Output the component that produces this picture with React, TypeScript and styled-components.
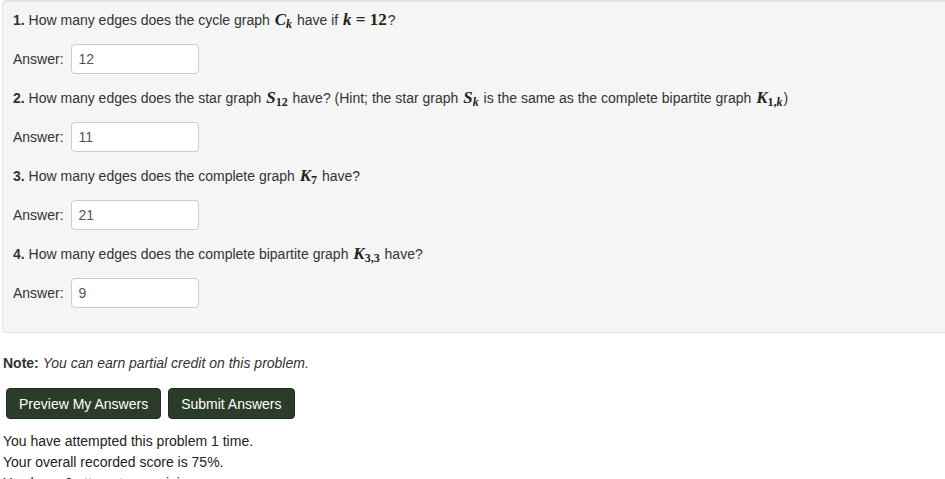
import styled, { createGlobalStyle } from 'styled-components';
import { ReactNode } from 'react';

const GlobalStyle = createGlobalStyle`
  html, body {
    margin: 0;
    padding: 0;
    overflow: hidden;
    background: #fff;
  }
  body {
    font-family: "Liberation Sans", Arial, sans-serif;
    font-size: 14px;
    line-height: 20px;
    color: #333;
  }
`;

const Page = styled.div`
  padding: 0 0 0 2px;
`;

const Well = styled.div`
  background: #f5f5f5;
  border: 1px solid #e3e3e3;
  border-radius: 4px;
  box-shadow: inset 0 1px 1px rgba(0, 0, 0, 0.05);
  padding: 9px 10px;
  margin-right: -20px;
`;

const Block = styled.div`
  padding-bottom: 14px;
  &:last-child {
    padding-bottom: 15px;
  }
`;

const Question = styled.p`
  margin: 0 0 14px;
  line-height: 20px;
  height: 20px;
  white-space: nowrap;
`;

const Num = styled.b`
  font-weight: bold;
`;

const AnswerRow = styled.div`
  display: flex;
  align-items: center;
  gap: 7px;
`;

const Label = styled.span`
  color: #333;
`;

const Input = styled.input`
  box-sizing: border-box;
  width: 128px;
  height: 30px;
  padding: 4px 7px;
  border: 1px solid #ccc;
  border-radius: 4px;
  background: #fff;
  font-family: "Liberation Sans", Arial, sans-serif;
  font-size: 14px;
  color: #555;
  outline: none;
`;

const Math = styled.span`
  font-family: "Liberation Serif", "DejaVu Serif", serif;
  font-size: 17px;
  font-weight: bold;
  color: #222;
  margin: 0 1px;
`;

const V = styled.i`
  font-style: italic;
`;

const Sub = styled.sub`
  font-size: 12px;
  line-height: 0;
  vertical-align: -3px;
`;

const Note = styled.p`
  margin: 20px 0 0 1px;
  line-height: 20px;
  em {
    font-style: italic;
  }
`;

const Buttons = styled.div`
  display: flex;
  gap: 7px;
  margin: 15px 0 0 4px;
`;

const Button = styled.button`
  height: 31px;
  padding: 0 12px;
  background: #2b3d2a;
  border: 1px solid #1f2d1f;
  border-radius: 4px;
  color: #fff;
  font-family: "Liberation Sans", Arial, sans-serif;
  font-size: 14px;
  cursor: pointer;
`;

const Status = styled.div`
  margin: 12px 0 0 1px;
  line-height: 21px;
  color: #222;
`;

const items: { n: number; text: ReactNode; value: string }[] = [
  {
    n: 1,
    text: (
      <>
        How many edges does the cycle graph{' '}
        <Math>
          <V>C</V>
          <Sub>
            <V>k</V>
          </Sub>
        </Math>{' '}
        have if{' '}
        <Math>
          <V>k</V> = 12
        </Math>
        ?
      </>
    ),
    value: '12',
  },
  {
    n: 2,
    text: (
      <>
        How many edges does the star graph{' '}
        <Math>
          <V>S</V>
          <Sub>12</Sub>
        </Math>{' '}
        have? (Hint; the star graph{' '}
        <Math>
          <V>S</V>
          <Sub>
            <V>k</V>
          </Sub>
        </Math>{' '}
        is the same as the complete bipartite graph{' '}
        <Math>
          <V>K</V>
          <Sub>
            1,<V>k</V>
          </Sub>
        </Math>
        )
      </>
    ),
    value: '11',
  },
  {
    n: 3,
    text: (
      <>
        How many edges does the complete graph{' '}
        <Math>
          <V>K</V>
          <Sub>7</Sub>
        </Math>{' '}
        have?
      </>
    ),
    value: '21',
  },
  {
    n: 4,
    text: (
      <>
        How many edges does the complete bipartite graph{' '}
        <Math>
          <V>K</V>
          <Sub>3,3</Sub>
        </Math>{' '}
        have?
      </>
    ),
    value: '9',
  },
];

export default function App() {
  return (
    <Page>
      <GlobalStyle />
      <Well>
        {items.map((q) => (
          <Block key={q.n}>
            <Question>
              <Num>{q.n}.</Num> {q.text}
            </Question>
            <AnswerRow>
              <Label>Answer:</Label>
              <Input defaultValue={q.value} />
            </AnswerRow>
          </Block>
        ))}
      </Well>
      <Note>
        <b>Note:</b> <em>You can earn partial credit on this problem.</em>
      </Note>
      <Buttons>
        <Button>Preview My Answers</Button>
        <Button>Submit Answers</Button>
      </Buttons>
      <Status>
        You have attempted this problem 1 time.
        <br />
        Your overall recorded score is 75%.
        <br />
        You have 6 attempts remaining.
      </Status>
    </Page>
  );
}
